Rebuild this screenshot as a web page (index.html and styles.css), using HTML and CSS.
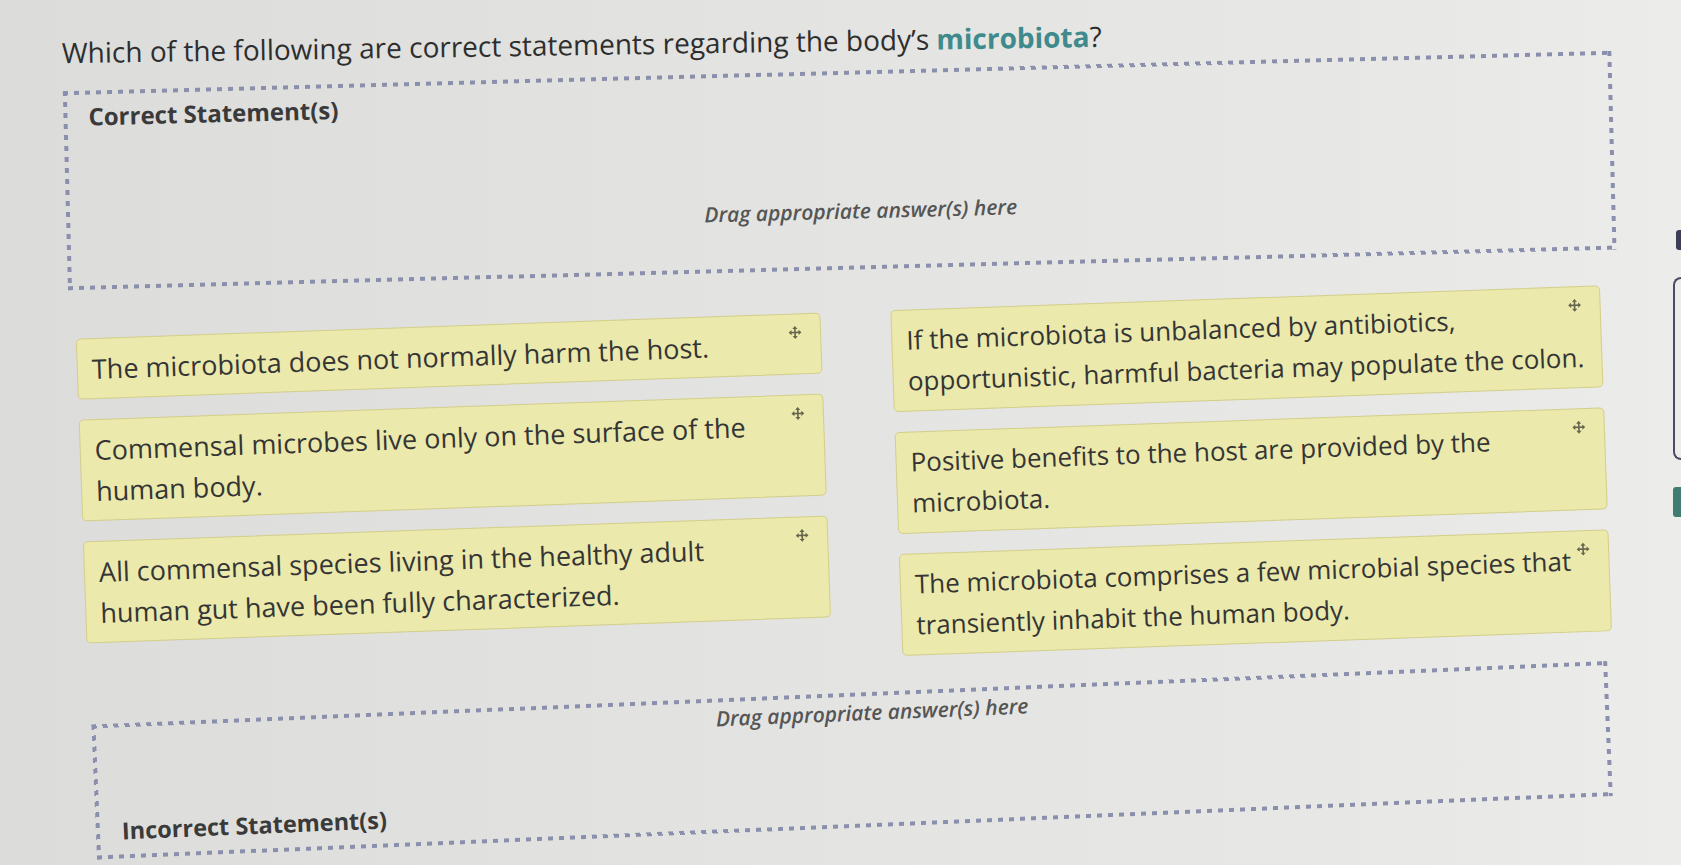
FILE: index.html
```html
<!DOCTYPE html>
<html lang="en">
<head>
<meta charset="utf-8">
<title>Microbiota sorting question</title>
<link rel="stylesheet" href="styles.css">
</head>
<body>
<div class="screen">
  <main class="page">
    <h1 class="question">Which of the following are correct statements regarding the body’s <span class="term">microbiota</span>?</h1>

    <section class="zone zone-top">
      <div class="zone-label">Correct Statement(s)</div>
      <div class="zone-hint">Drag appropriate answer(s) here</div>
    </section>

    <div class="cards">
      <div class="col col-left">
        <div class="card"><p>The microbiota does not normally harm the host.</p>
          <svg class="move" viewBox="0 0 12 12"><path d="M6 0.5L8.2 3H6.7V5.3H9V3.8L11.5 6L9 8.2V6.7H6.7V9H8.2L6 11.5L3.8 9H5.3V6.7H3V8.2L0.5 6L3 3.8V5.3H5.3V3H3.8Z"/></svg>
        </div>
        <div class="card"><p>Commensal microbes live only on the surface of the<br>human body.</p>
          <svg class="move" viewBox="0 0 12 12"><path d="M6 0.5L8.2 3H6.7V5.3H9V3.8L11.5 6L9 8.2V6.7H6.7V9H8.2L6 11.5L3.8 9H5.3V6.7H3V8.2L0.5 6L3 3.8V5.3H5.3V3H3.8Z"/></svg>
        </div>
        <div class="card"><p>All commensal species living in the healthy adult<br>human gut have been fully characterized.</p>
          <svg class="move" viewBox="0 0 12 12"><path d="M6 0.5L8.2 3H6.7V5.3H9V3.8L11.5 6L9 8.2V6.7H6.7V9H8.2L6 11.5L3.8 9H5.3V6.7H3V8.2L0.5 6L3 3.8V5.3H5.3V3H3.8Z"/></svg>
        </div>
      </div>
      <div class="col col-right">
        <div class="card"><p>If the microbiota is unbalanced by antibiotics,<br>opportunistic, harmful bacteria may populate the colon.</p>
          <svg class="move" viewBox="0 0 12 12"><path d="M6 0.5L8.2 3H6.7V5.3H9V3.8L11.5 6L9 8.2V6.7H6.7V9H8.2L6 11.5L3.8 9H5.3V6.7H3V8.2L0.5 6L3 3.8V5.3H5.3V3H3.8Z"/></svg>
        </div>
        <div class="card"><p>Positive benefits to the host are provided by the<br>microbiota.</p>
          <svg class="move" viewBox="0 0 12 12"><path d="M6 0.5L8.2 3H6.7V5.3H9V3.8L11.5 6L9 8.2V6.7H6.7V9H8.2L6 11.5L3.8 9H5.3V6.7H3V8.2L0.5 6L3 3.8V5.3H5.3V3H3.8Z"/></svg>
        </div>
        <div class="card"><p>The microbiota comprises a few microbial species that<br>transiently inhabit the human body.</p>
          <svg class="move" viewBox="0 0 12 12"><path d="M6 0.5L8.2 3H6.7V5.3H9V3.8L11.5 6L9 8.2V6.7H6.7V9H8.2L6 11.5L3.8 9H5.3V6.7H3V8.2L0.5 6L3 3.8V5.3H5.3V3H3.8Z"/></svg>
        </div>
      </div>
    </div>

    <section class="zone zone-bottom">
      <div class="zone-hint">Drag appropriate answer(s) here</div>
      <div class="zone-label">Incorrect Statement(s)</div>
    </section>
  </main>

  <aside class="edge">
    <div class="edge-tab"></div>
    <div class="edge-frame"></div>
    <div class="edge-teal"></div>
  </aside>
</div>
</body>
</html>
```

FILE: styles.css
```css
html, body {
  margin: 0;
  height: 865px;
  overflow: hidden;
}

body {
  background: linear-gradient(to right, #dcdcda 0%, #e3e3e1 45%, #e8e8e6 85%, #ececea 100%);
  font-family: "Open Sans", "Noto Sans", sans-serif;
  color: #333333;
}

.screen {
  display: flex;
  height: 865px;
}

.page {
  flex: 1;
  min-width: 0;
  padding: 14px 51px 0 72px;
  transform: rotate(-1.5deg);
  transform-origin: 840px 432px;
}

.question {
  margin: 0;
  font-size: 28px;
  line-height: 36px;
  font-weight: 400;
  color: #2e2e2e;
  white-space: nowrap;
  transform: rotate(0.6deg);
  transform-origin: 0 50%;
}

.term {
  font-weight: 700;
  color: #3e8a8d;
}

.zone {
  box-sizing: border-box;
  display: flex;
  flex-direction: column;
  --dot: #8b8fae;
  background:
    repeating-linear-gradient(to right, var(--dot) 0 5px, transparent 5px 11px) left top / 100% 4px no-repeat,
    repeating-linear-gradient(to right, var(--dot) 0 5px, transparent 5px 11px) left bottom / 100% 4px no-repeat,
    repeating-linear-gradient(to bottom, var(--dot) 0 5px, transparent 5px 11px) left top / 4px 100% no-repeat,
    repeating-linear-gradient(to bottom, var(--dot) 0 5px, transparent 5px 11px) right top / 4px 100% no-repeat;
}

.zone-top {
  margin-top: 21px;
  height: 199px;
  padding: 11px 25px;
}

.zone-label {
  font-size: 24px;
  line-height: 30px;
  font-weight: 700;
  color: #3a3a3a;
}

.zone-hint {
  font-size: 21px;
  line-height: 28px;
  font-weight: 600;
  font-style: italic;
  color: #555555;
  text-align: center;
  padding-left: 40px;
}

.zone-top .zone-hint {
  margin-top: 85px;
}

.cards {
  margin: 42px 16px 0 8px;
  display: grid;
  grid-template-columns: 745px 710px;
  column-gap: 70px;
  align-items: start;
  transform: rotate(-0.5deg);
}

.col {
  display: flex;
  flex-direction: column;
  gap: 20px;
}

.card {
  position: relative;
  background: #ebe9ac;
  border: 1px solid #d3ce89;
  border-radius: 5px;
  padding: 9px 30px 9px 14px;
}

.card p {
  margin: 0;
  font-size: 26.5px;
  line-height: 41px;
  color: #353535;
  white-space: nowrap;
}

.col-left .card p {
  font-size: 27px;
}

.col-right .card p {
  font-size: 26px;
}

.move {
  position: absolute;
  top: 11px;
  right: 18px;
  width: 14px;
  height: 14px;
  fill: #66664f;
}

.zone-bottom {
  margin: 35px 19px 0 13px;
  height: 135px;
  padding: 6px 22px 13px 26px;
  justify-content: space-between;
  transform: rotate(-0.9deg);
}

.zone-bottom .zone-label {
  font-size: 23.5px;
}

.edge {
  width: 9px;
  flex: none;
  padding-top: 230px;
  display: flex;
  flex-direction: column;
  align-items: flex-end;
}

.edge-tab {
  width: 5px;
  height: 20px;
  background: #3c3e58;
  border-radius: 3px 0 0 3px;
}

.edge-frame {
  box-sizing: border-box;
  margin-top: 27px;
  width: 8px;
  height: 183px;
  border: 2px solid #4b4c66;
  border-right: none;
  border-radius: 8px 0 0 8px;
}

.edge-teal {
  margin-top: 27px;
  width: 8px;
  height: 30px;
  background: #417c73;
  border-radius: 3px 0 0 3px;
}
```
